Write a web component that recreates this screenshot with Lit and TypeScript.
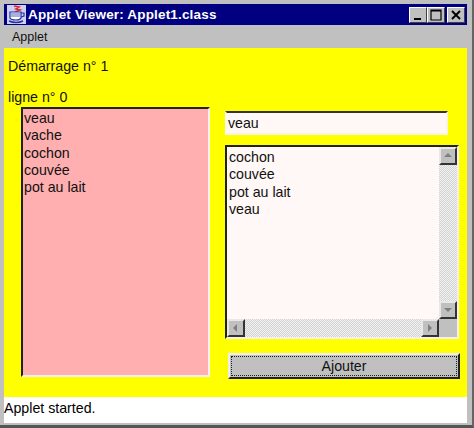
import { LitElement, html, css, svg } from "lit";
import { customElement } from "lit/decorators.js";

const upArrow = svg`<path d="M2 7 L6 3 L10 7 Z" fill="#808080"/>`;
const downArrow = svg`<path d="M2 4 L10 4 L6 8 Z" fill="#808080"/>`;
const leftArrow = svg`<path d="M7 2 L7 10 L3 6 Z" fill="#808080"/>`;
const rightArrow = svg`<path d="M4 2 L4 10 L8 6 Z" fill="#808080"/>`;

@customElement("app-root")
export class AppRoot extends LitElement {
  static styles = css`
    :host {
      display: block;
      width: 474px;
      height: 428px;
      font-family: "Liberation Sans", Arial, sans-serif;
      font-size: 14.2px;
      color: #111;
      overflow: hidden;
    }
    .window {
      box-sizing: border-box;
      width: 474px;
      height: 428px;
      background: #c0c0c0;
      padding: 4px 5px 2px 4px;
      display: flex;
      flex-direction: column;
      border-right: 2px solid #666;
      border-bottom: 3px solid #555;
    }
    .title {
      height: 21px;
      flex: none;
      background: #000080;
      color: #fff;
      display: flex;
      align-items: center;
      padding: 0 2px 0 3px;
      gap: 2px;
    }
    .title-text {
      flex: 1;
      font-weight: bold;
      font-size: 13.5px;
      letter-spacing: 0.17px;
      white-space: nowrap;
    }
    .cup { width: 19px; height: 19px; flex: none; }
    .btns { display: flex; }
    .wbtn {
      box-sizing: border-box;
      width: 18px;
      height: 16px;
      background: #c0c0c0;
      border: 1px solid;
      border-color: #fff #404040 #404040 #fff;
      display: flex;
      align-items: center;
      justify-content: center;
    }
    .wbtn svg { width: 12px; height: 12px; display: block; }
    .wbtn.last { margin-left: 2px; }
    .menu {
      height: 23px;
      flex: none;
      display: flex;
      align-items: center;
      padding-left: 8px;
      font-size: 12.5px;
      box-sizing: border-box;
    }
    .applet {
      flex: 1;
      background: #ffff00;
      padding: 10px 0 0 4px;
      display: flex;
      flex-direction: column;
      min-height: 0;
    }
    .label { height: 17px; line-height: 17px; white-space: nowrap; }
    .label.second { margin-top: 14px; }
    .main { display: flex; margin-top: 1px; padding-left: 13px; }
    .sunken {
      box-sizing: border-box;
      border-style: solid;
      border-width: 2px;
      border-color: #222 #f4f0ee #f4f0ee #222;
    }
    .pink {
      width: 189px;
      height: 270px;
      background: #ffafaf;
      padding: 1px 0 0 1px;
      line-height: 17.3px;
    }
    .right {
      margin-left: 15px;
      display: flex;
      flex-direction: column;
      width: 235px;
    }
    .field {
      width: 223px;
      height: 24px;
      margin-top: 4px;
      background: #fff8f6;
      padding-left: 1px;
      line-height: 20px;
      border-left-color: #fff8f6;
      border-right-color: #f8f4e0;
      border-bottom-color: #f8f4e0;
      border-top-color: #333;
    }
    .list {
      margin-top: 10px;
      width: 234px;
      height: 194px;
      background: #fff8f6;
      display: grid;
      grid-template-columns: 1fr 18px;
      grid-template-rows: 1fr 18px;
      border-right-color: #f4f0ee;
    }
    .items { padding: 2px 0 0 2px; line-height: 17.3px; }
    .track {
      background-color: #e2e2e2;
      background-image: conic-gradient(#d4d4d4 25%, #f0f0f0 0 50%, #d4d4d4 0 75%, #f0f0f0 0);
      background-size: 2px 2px;
      display: flex;
      justify-content: space-between;
    }
    .track.v { flex-direction: column; }
    .sb {
      box-sizing: border-box;
      width: 18px;
      height: 18px;
      background: #c0c0c0;
      border: 2px solid;
      border-color: #e8e8e8 #333 #333 #e8e8e8;
      display: flex;
      align-items: center;
      justify-content: center;
    }
    .sb svg { width: 12px; height: 12px; display: block; flex: none; }
    .corner { background: #c0c0c0; }
    .button {
      margin: 14px 0 0 3px;
      box-sizing: border-box;
      width: 232px;
      height: 26px;
      background: #c0c0c0;
      border: 2px solid;
      border-color: #eee #222 #222 #eee;
      padding: 1px;
      display: flex;
    }
    .focus {
      flex: 1;
      border: 1px dotted #222;
      display: flex;
      align-items: center;
      justify-content: center;
    }
    .status {
      height: 26px;
      flex: none;
      box-sizing: border-box;
      background: #fff;
      display: flex;
      align-items: center;
      padding: 0 0 4px 0;
      color: #000;
    }
  `;

  render() {
    return html`
      <div class="window">
        <div class="title">
          <svg class="cup" viewBox="0 0 19 19">
            <rect x="0" y="0" width="19" height="19" fill="#d0d0f0"/>
            <path d="M7 1 L12 2 L9 4 L13 5 L8 7" fill="none" stroke="#d83030" stroke-width="1.6"/>
            <path d="M3 7 H14 V13 Q13 15 9 15 Q4 15 3 13 Z" fill="#fff" stroke="#2030a0" stroke-width="1.2"/>
            <path d="M14 8 H17 V11 L14 12" fill="none" stroke="#2030a0" stroke-width="1.2"/>
            <path d="M4 9 H13 M4 11 H13" stroke="#5060c0" stroke-width="1"/>
            <path d="M2 16 Q9 19 16 16" fill="none" stroke="#2030a0" stroke-width="1.4"/>
          </svg>
          <span class="title-text">Applet Viewer: Applet1.class</span>
          <div class="btns">
            <div class="wbtn"><svg viewBox="0 0 12 12"><rect x="2" y="9" width="7" height="2" fill="#000"/></svg></div>
            <div class="wbtn"><svg viewBox="0 0 12 12"><path d="M1 1 H11 V11 H1 Z M1 2 H11" fill="none" stroke="#000" stroke-width="1.2"/></svg></div>
            <div class="wbtn last"><svg viewBox="0 0 12 12"><path d="M2 2 L10 10 M10 2 L2 10" stroke="#000" stroke-width="2"/></svg></div>
          </div>
        </div>
        <div class="menu">Applet</div>
        <div class="applet">
          <div class="label">Démarrage n° 1</div>
          <div class="label second">ligne n° 0</div>
          <div class="main">
            <div class="sunken pink">
              <div>veau</div><div>vache</div><div>cochon</div><div>couvée</div><div>pot au lait</div>
            </div>
            <div class="right">
              <div class="sunken field">veau</div>
              <div class="sunken list">
                <div class="items">
                  <div>cochon</div><div>couvée</div><div>pot au lait</div><div>veau</div>
                </div>
                <div class="track v">
                  <div class="sb"><svg viewBox="0 0 12 12">${upArrow}</svg></div>
                  <div class="sb"><svg viewBox="0 0 12 12">${downArrow}</svg></div>
                </div>
                <div class="track">
                  <div class="sb"><svg viewBox="0 0 12 12">${leftArrow}</svg></div>
                  <div class="sb"><svg viewBox="0 0 12 12">${rightArrow}</svg></div>
                </div>
                <div class="corner"></div>
              </div>
              <div class="button"><div class="focus">Ajouter</div></div>
            </div>
          </div>
        </div>
        <div class="status">Applet started.</div>
      </div>
    `;
  }
}
